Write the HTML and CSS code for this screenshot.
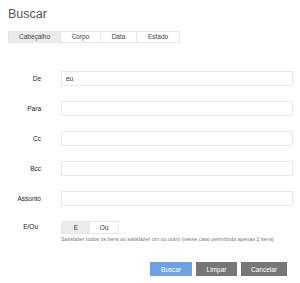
FILE: index.html
```html
<!DOCTYPE html>
<html lang="pt">
<head>
  <meta charset="UTF-8">
  <title>Buscar</title>
  <link rel="stylesheet" href="styles.css">
</head>
<body>
  <div class="search-panel">
    <h1 class="title">Buscar</h1>

    <div class="tabs">
      <div class="tab active">Cabeçalho</div>
      <div class="tab">Corpo</div>
      <div class="tab">Data</div>
      <div class="tab">Estado</div>
    </div>

    <form class="fields">
      <div class="row">
        <label class="label">De</label>
        <input class="input" type="text" value="eu">
      </div>
      <div class="row">
        <label class="label">Para</label>
        <input class="input" type="text">
      </div>
      <div class="row">
        <label class="label">Cc</label>
        <input class="input" type="text">
      </div>
      <div class="row">
        <label class="label">Bcc</label>
        <input class="input" type="text">
      </div>
      <div class="row">
        <label class="label">Assunto</label>
        <input class="input" type="text">
      </div>
      <div class="row row-toggle">
        <label class="label">E/Ou</label>
        <div class="toggle-wrap">
          <div class="toggle">
            <span class="opt on">E</span>
            <span class="opt">Ou</span>
          </div>
          <p class="hint">Satisfazer todos os itens ou satisfazer um ou outro (nesse caso permitindo apenas 2 itens)</p>
        </div>
      </div>
    </form>

    <div class="actions">
      <button class="btn btn-primary">Buscar</button>
      <button class="btn">Limpar</button>
      <button class="btn">Cancelar</button>
    </div>
  </div>
</body>
</html>
```

FILE: styles.css
```css
* {
  box-sizing: border-box;
}

body {
  margin: 0;
  background: #fff;
  font-family: "Liberation Sans", Arial, sans-serif;
  color: #333;
}

.search-panel {
  padding: 6px 7px 0 8px;
}

.title {
  margin: 0;
  font-size: 12.5px;
  font-weight: normal;
  color: #555;
  line-height: 16px;
}

.tabs {
  display: flex;
  margin-top: 9px;
}

.tab {
  height: 12px;
  line-height: 10px;
  font-size: 6.5px;
  color: #444;
  text-align: center;
  border: 1px solid #e6e6e6;
  border-left: none;
  width: 40px;
}

.tab:first-child {
  border-left: 1px solid #e6e6e6;
  width: 53px;
}

.tab:nth-child(3) {
  width: 36px;
}

.tab:nth-child(4) {
  width: 43px;
}

.tab.active {
  background: #ececec;
}

.fields {
  margin-top: 28px;
  display: flex;
  flex-direction: column;
  gap: 15px;
}

.row {
  display: flex;
  align-items: center;
  height: 15px;
}

.label {
  width: 33px;
  text-align: right;
  font-size: 6.5px;
  color: #222;
}

.input {
  margin-left: 20px;
  width: 232px;
  height: 15px;
  border: 1px solid #e8e8e8;
  padding: 0 4px;
  font-family: inherit;
  font-size: 6.5px;
  color: #333;
  outline: none;
}

.row-toggle {
  align-items: flex-start;
  height: auto;
}

.row-toggle .label {
  line-height: 12px;
  width: 30px;
}

.toggle-wrap {
  margin-left: 23px;
}

.toggle {
  display: flex;
  width: 58px;
  height: 13px;
  border: 1px solid #e6e6e6;
}

.opt {
  flex: 1;
  text-align: center;
  font-size: 6.5px;
  line-height: 11px;
  color: #333;
}

.opt.on {
  background: #ececec;
  flex: 0 0 28px;
}

.hint {
  margin: 2px 0 0;
  font-size: 5.3px;
  color: #777;
  white-space: nowrap;
}

.actions {
  display: flex;
  justify-content: flex-end;
  gap: 4px;
  margin-top: 20px;
  padding-right: 6px;
}

.btn {
  height: 14px;
  border: none;
  padding: 0;
  width: 41px;
  font-family: inherit;
  font-size: 6.5px;
  color: #fff;
  background: #777;
}

.btn:last-child {
  width: 46px;
}

.btn-primary {
  width: 42px;
  background: #6ea0e2;
}
```
